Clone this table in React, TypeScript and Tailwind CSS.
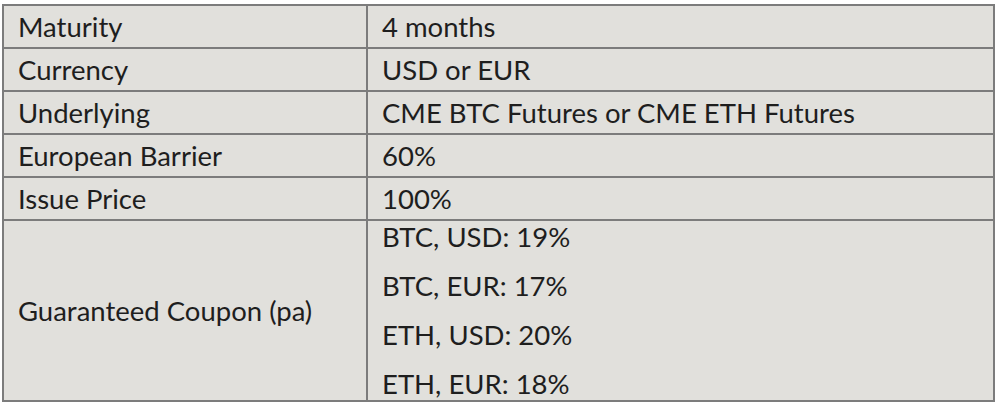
import React from "react";

const rows: [string, string][] = [
  ["Maturity", "4 months"],
  ["Currency", "USD or EUR"],
  ["Underlying", "CME BTC Futures or CME ETH Futures"],
  ["European Barrier", "60%"],
  ["Issue Price", "100%"],
];

const coupons = ["BTC, USD: 19%", "BTC, EUR: 17%", "ETH, USD: 20%", "ETH, EUR: 18%"];

export default function App() {
  return (
    <div className="w-[1000px] h-[420px] bg-white pt-[4px] pl-[2px]" style={{ fontFamily: "Lato, 'Noto Sans', sans-serif" }}>
      <table className="border-collapse w-[993px] bg-[#e1e0dc] text-[#1e1e1e] text-[27.5px]">
        <tbody>
          {rows.map(([k, v]) => (
            <tr key={k} className="h-[43px]">
              <td className="border-2 border-[#7c7c7c] w-[364px] pl-[14px] py-0 leading-[30px]">{k}</td>
              <td className="border-2 border-[#7c7c7c] pl-[14px] py-0 leading-[30px]">{v}</td>
            </tr>
          ))}
          <tr className="h-[178px]">
            <td className="border-2 border-[#7c7c7c] pl-[14px] leading-[30px]">Guaranteed Coupon (pa)</td>
            <td className="border-2 border-[#7c7c7c] pl-[14px] p-0">
              <div className="flex flex-col gap-[17px]">
                {coupons.map((c) => (
                  <div key={c} className="leading-[32px]">{c}</div>
                ))}
              </div>
            </td>
          </tr>
        </tbody>
      </table>
    </div>
  );
}
